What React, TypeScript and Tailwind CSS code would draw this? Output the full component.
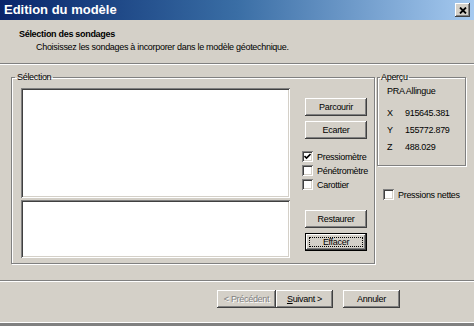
import React from "react";

const raised =
  "bg-[#d4d0c8] shadow-[inset_-1px_-1px_0_#404040,inset_1px_1px_0_#ffffff,inset_-2px_-2px_0_#808080,inset_2px_2px_0_#d4d0c8]";
const sunken =
  "bg-white shadow-[inset_1px_1px_0_#808080,inset_-1px_-1px_0_#ffffff,inset_2px_2px_0_#404040,inset_-2px_-2px_0_#d4d0c8]";
const etched =
  "border border-[#808080] shadow-[1px_1px_0_#ffffff,inset_1px_1px_0_#ffffff] min-w-0 p-0";

function Button({
  label,
  width = "w-[62px]",
  disabled,
  isDefault,
  underline,
}: {
  label: string;
  width?: string;
  disabled?: boolean;
  isDefault?: boolean;
  underline?: boolean;
}) {
  if (isDefault) {
    return (
      <div className={`${width} h-[18px] border border-black`}>
        <div className={`${raised} w-full h-full flex items-center justify-center p-[3px]`}>
          <div className="w-full h-full flex items-center justify-center border border-dotted border-black">
            {label}
          </div>
        </div>
      </div>
    );
  }
  return (
    <div className={`${raised} ${width} h-[18px] flex items-center justify-center`}>
      {disabled ? (
        <span className="text-[#808080] [text-shadow:1px_1px_0_#ffffff]">{label}</span>
      ) : underline ? (
        <span>
          <span className="underline">S</span>
          {label.slice(1)}
        </span>
      ) : (
        <span>{label}</span>
      )}
    </div>
  );
}

function Check({ label, checked }: { label: string; checked?: boolean }) {
  return (
    <div className="flex items-center gap-[4px] h-[13px] whitespace-nowrap">
      <div className={`${sunken} w-[11px] h-[11px] shrink-0 flex items-center justify-center`}>
        {checked && (
          <svg width="7" height="7" viewBox="0 0 7 7">
            <path d="M0.5 3 L2.5 5 L6.5 1" stroke="#000" strokeWidth="1.6" fill="none" />
          </svg>
        )}
      </div>
      <span>{label}</span>
    </div>
  );
}

export default function App() {
  return (
    <div className="w-[474px] h-[326px] bg-[#d4d0c8] flex flex-col font-['Liberation_Sans',Arial,sans-serif] text-[9px] tracking-[-0.3px] leading-[12px] text-black overflow-hidden">
      {/* Title bar */}
      <div className="h-[20px] shrink-0 flex items-center justify-between pl-[4px] pr-[4px] bg-gradient-to-r from-[#0a246a] via-[#3a6ea5] to-[#a6caf0]">
        <span className="text-white font-bold text-[13px] leading-[16px] tracking-normal">Edition du modèle</span>
        <div className={`${raised} w-[15px] h-[14px] flex items-center justify-center`}>
          <svg width="8" height="7" viewBox="0 0 8 7">
            <path d="M1 0.5 L7 6.5 M7 0.5 L1 6.5" stroke="#000" strokeWidth="1.8" />
          </svg>
        </div>
      </div>

      {/* Header */}
      <div className="h-[44px] shrink-0 border-b border-[#808080] shadow-[0_1px_0_#ffffff] pl-[19px] pt-[8px]">
        <div className="font-bold">Sélection des sondages</div>
        <div className="pl-[17px] pt-[1px]">Choisissez les sondages à incorporer dans le modèle géotechnique.</div>
      </div>

      {/* Body */}
      <div className="flex-1 flex pl-[11px] pt-[7px] gap-[2px]">
        <fieldset className={`${etched} w-[364px] h-[193px] shrink-0`}>
          <legend className="ml-[3px] px-[2px]">Sélection</legend>
          <div className="flex gap-[15px] pt-[5px] pl-[9px]">
            <div className="w-[269px] flex flex-col gap-[2px]">
              <div className={`${sunken} h-[110px]`} />
              <div className={`${sunken} h-[58px]`} />
            </div>
            <div className="w-[62px] flex flex-col pt-[10px]">
              <div className="flex flex-col gap-[5px]">
                <Button label="Parcourir" />
                <Button label="Ecarter" />
              </div>
              <div className="flex flex-col gap-[1px] mt-[11px] -ml-[3px]">
                <Check label="Pressiomètre" checked />
                <Check label="Pénétromètre" />
                <Check label="Carottier" />
              </div>
              <div className="flex flex-col gap-[5px] mt-[19px]">
                <Button label="Restaurer" />
                <Button label="Effacer" isDefault />
              </div>
            </div>
          </div>
        </fieldset>

        <div className="flex flex-col">
          <fieldset className={`${etched} w-[89px] h-[95px]`}>
            <legend className="ml-[2px] px-[1px]">Aperçu</legend>
            <div className="pl-[9px]">
              <div className="pt-[2px]">PRA Allingue</div>
              <div className="flex flex-col gap-[5px] pt-[10px]">
                <div className="flex">
                  <span className="w-[18px]">X</span>
                  <span>915645.381</span>
                </div>
                <div className="flex">
                  <span className="w-[18px]">Y</span>
                  <span>155772.879</span>
                </div>
                <div className="flex">
                  <span className="w-[18px]">Z</span>
                  <span>488.029</span>
                </div>
              </div>
            </div>
          </fieldset>
          <div className="pl-[6px] pt-[22px]">
            <Check label="Pressions nettes" />
          </div>
        </div>
      </div>

      {/* Footer */}
      <div className="h-[42px] shrink-0 border-t border-[#808080] shadow-[inset_0_1px_0_#ffffff] flex items-start pl-[217px] pt-[9px]">
        <Button label="< Précédent" width="w-[59px]" disabled />
        <Button label="Suivant >" width="w-[57px]" underline />
        <div className="ml-[10px]">
          <Button label="Annuler" width="w-[57px]" />
        </div>
      </div>
      <div className="h-[1px] bg-[#ffffff] shrink-0" />
      <div className="h-[3px] bg-[#808080] shrink-0" />
    </div>
  );
}
